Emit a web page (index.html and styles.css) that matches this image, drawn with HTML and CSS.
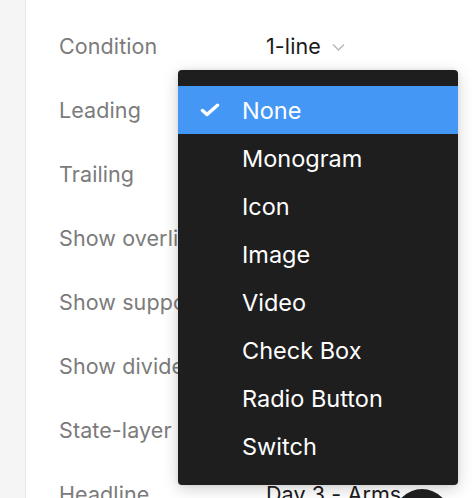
FILE: index.html
```html
<!DOCTYPE html>
<html lang="en">
<head>
  <meta charset="UTF-8">
  <title>Properties</title>
  <link rel="stylesheet" href="styles.css">
</head>
<body>
  <div class="layout">
    <div class="rail"></div>

    <div class="panel">
      <div class="prop-row">
        <span class="prop-label">Condition</span>
        <span class="prop-value">1-line
          <svg class="chevron" width="13" height="8" viewBox="0 0 13 8"><path d="M1 1.5l5.5 5.5 5.5-5.5" fill="none" stroke="#b8b8b8" stroke-width="1.4"/></svg>
        </span>
      </div>
      <div class="prop-row"><span class="prop-label">Leading</span><span class="prop-value">None</span></div>
      <div class="prop-row"><span class="prop-label">Trailing</span><span class="prop-value">None</span></div>
      <div class="prop-row"><span class="prop-label">Show overline</span><span class="prop-value">False</span></div>
      <div class="prop-row"><span class="prop-label">Show supporting text</span><span class="prop-value">False</span></div>
      <div class="prop-row"><span class="prop-label">Show divider</span><span class="prop-value">False</span></div>
      <div class="prop-row"><span class="prop-label">State-layer</span><span class="prop-value">Enabled</span></div>
      <div class="prop-row"><span class="prop-label">Headline</span><span class="prop-value">Day 3 - Arms</span></div>
    </div>
  </div>

  <!-- Dropdown menu for Leading -->
  <ul class="menu">
    <li class="menu-item selected">
      <svg class="check" width="20" height="14" viewBox="0 0 20 14"><path d="M2.5 7.5l4.5 4L17.5 2.2" fill="none" stroke="#fff" stroke-width="3.4" stroke-linecap="round" stroke-linejoin="round"/></svg>
      None
    </li>
    <li class="menu-item">Monogram</li>
    <li class="menu-item">Icon</li>
    <li class="menu-item">Image</li>
    <li class="menu-item">Video</li>
    <li class="menu-item">Check Box</li>
    <li class="menu-item">Radio Button</li>
    <li class="menu-item">Switch</li>
  </ul>

  <div class="fab"></div>
</body>
</html>
```

FILE: styles.css
```css
/* Basic Styling */
body {
  margin: 0;
  background-color: #fff;
  font-family: Inter, "Noto Sans", sans-serif;
  overflow: hidden;
}

.layout {
  display: flex;
  height: 100vh;
  overflow: hidden;
}

.rail {
  width: 25px;
  flex-shrink: 0;
  background-color: #f5f5f5;
  border-right: 1px solid #e6e6e6;
}

.panel {
  flex: 1;
  padding: 14px 0 0 33px;
}

.prop-row {
  display: flex;
  align-items: center;
  height: 64px;
  font-size: 21.5px;
  letter-spacing: 0.1px;
  white-space: nowrap;
}

.prop-label {
  width: 207px;
  flex-shrink: 0;
  color: #7b7b7b;
}

.prop-value {
  color: #1a1a1a;
  display: flex;
  align-items: center;
}

.chevron {
  margin-left: 11px;
  margin-top: 2px;
}

.menu {
  position: absolute;
  left: 178px;
  top: 70px;
  width: 280px;
  margin: 0;
  padding: 16px 0 15px;
  list-style: none;
  background-color: #1e1e1e;
  border-radius: 4px;
  box-shadow: 0 4px 16px rgba(0, 0, 0, 0.18), 0 0 4px rgba(0, 0, 0, 0.08);
}

.menu-item {
  position: relative;
  height: 48px;
  display: flex;
  align-items: center;
  padding-left: 64px;
  color: #fff;
  font-size: 23.5px;
}

.menu-item.selected {
  background-color: #4597f6;
}

.check {
  position: absolute;
  left: 22px;
  top: 17px;
}

.fab {
  position: absolute;
  left: 394px;
  top: 489px;
  width: 56px;
  height: 56px;
  border-radius: 50%;
  background-color: #1e1e1e;
}
```
